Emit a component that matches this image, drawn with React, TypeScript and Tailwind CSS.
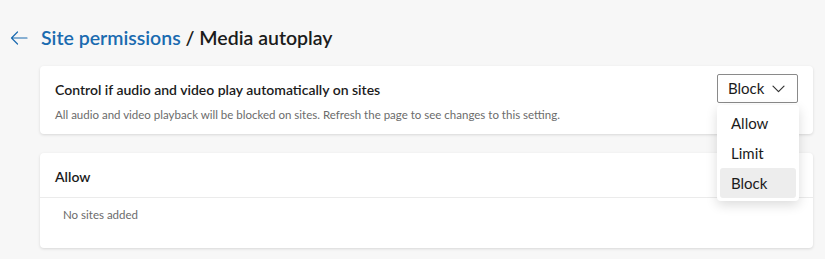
const font = { fontFamily: '"Segoe UI", Lato, "Open Sans", sans-serif' };

function BackArrow() {
  return (
    <svg width="18" height="14" viewBox="0 0 18 14" fill="none" className="text-[#1a6bb0]">
      <path d="M17 7H1.5M7.5 1L1.5 7l6 6" stroke="currentColor" strokeWidth="1.2" strokeLinecap="round" strokeLinejoin="round" />
    </svg>
  );
}

function Chevron() {
  return (
    <svg width="13" height="8" viewBox="0 0 13 8" fill="none" className="text-[#333]">
      <path d="M1 1.2l5.5 5.5L12 1.2" stroke="currentColor" strokeWidth="1.2" strokeLinecap="round" strokeLinejoin="round" />
    </svg>
  );
}

function AutoplaySelect() {
  const options = ["Allow", "Limit", "Block"];
  const value = "Block";

  return (
    <div className="relative">
      <button className="flex h-[29px] w-[81px] items-center justify-between rounded-[2px] border border-[#8a8a8a] bg-white pl-[10px] pr-[12px] text-[15px] text-[#1b1b1b]">
        <span>{value}</span>
        <Chevron />
      </button>
      <div className="absolute left-0 top-[31px] z-10 flex w-[82px] flex-col gap-0 rounded-[4px] bg-white p-[3px] shadow-[0_4px_12px_rgba(0,0,0,0.14)]">
        {options.map((o) => (
          <div
            key={o}
            className={
              "flex h-[30px] items-center rounded-[3px] px-[11px] text-[15px] text-[#1b1b1b] " +
              (o === value ? "bg-[#ededed]" : "")
            }
          >
            {o}
          </div>
        ))}
      </div>
    </div>
  );
}

export default function App() {
  return (
    <div className="h-[259px] w-[825px] overflow-hidden bg-[#f7f7f7]" style={font}>
      <div className="flex items-center gap-[13px] pl-[10px] pt-[25px]">
        <BackArrow />
        <h1 className="text-[19.5px] font-semibold leading-[26px] text-[#1b1b1b]">
          <span className="text-[#1a6bb0]">Site permissions</span> / Media autoplay
        </h1>
      </div>

      <div className="ml-[40px] mr-[12px] mt-[15px] flex flex-col gap-[19px]">
        <div className="flex h-[68px] items-start justify-between rounded-[4px] bg-white pl-[15px] pr-[15px] pt-[8px] shadow-[0_1px_3px_rgba(0,0,0,0.13)]">
          <div className="flex flex-col pt-[6px]">
            <div className="text-[14px] font-semibold leading-[20px] text-[#1b1b1b]">
              Control if audio and video play automatically on sites
            </div>
            <div className="mt-[7px] text-[11.5px] leading-[16px] text-[#6b6b6b]">
              All audio and video playback will be blocked on sites. Refresh the page to see changes to this setting.
            </div>
          </div>
          <AutoplaySelect />
        </div>

        <div className="flex h-[95px] flex-col rounded-[4px] bg-white shadow-[0_1px_3px_rgba(0,0,0,0.13)]">
          <div className="flex h-[45px] items-center border-b border-[#ebebeb] pl-[15px] pt-[2px] text-[14px] font-semibold text-[#1b1b1b]">
            Allow
          </div>
          <div className="pl-[23px] pt-[8px] text-[11.5px] text-[#6b6b6b]">No sites added</div>
        </div>
      </div>
    </div>
  );
}
